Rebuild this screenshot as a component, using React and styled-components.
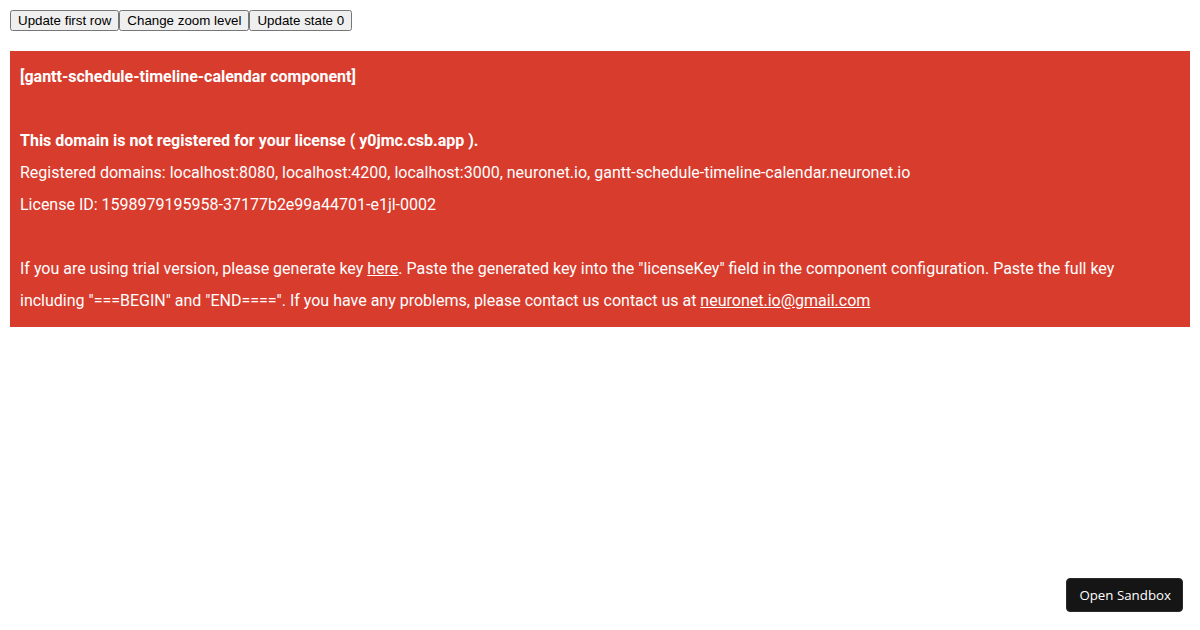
import React, { useState } from "react"
import styled, { createGlobalStyle } from "styled-components"

const GlobalStyle = createGlobalStyle`
  html, body {
    margin: 0;
    padding: 0;
    background: #fff;
  }
`

const Page = styled.div`
  padding: 10px;
`

const Toolbar = styled.div`
  display: flex;
  align-items: flex-start;
  margin-bottom: 20px;
`

const ToolButton = styled.button`
  font-family: "Liberation Sans", Arial, sans-serif;
  font-size: 13.333px;
  margin: 0;
`

const LicenseBox = styled.div`
  background-color: #d83c2d;
  color: #fff;
  padding: 10px 10px 10px;
  font-family: Roboto, "Noto Sans", sans-serif;
  font-size: 16px;
  line-height: 32px;
  p {
    margin: 0;
  }
  a {
    color: #fff;
    text-decoration: underline;
  }
`

const Line = styled.p`
  font-weight: ${({ bold }) => (bold ? 700 : 400)};
  min-height: 32px;
`

const SandboxButton = styled.a`
  position: fixed;
  right: 17px;
  bottom: 18px;
  height: 34px;
  padding: 0 11px 0 12px;
  display: flex;
  align-items: center;
  background: #151515;
  color: #fff;
  border: 1px solid #2a2a2a;
  border-radius: 4px;
  font-family: "Open Sans", "Noto Sans", sans-serif;
  font-size: 13.3px;
  text-decoration: none;
  box-sizing: border-box;
`

function App() {
    const [count, setCount] = useState(0)

    return (
        <Page>
            <GlobalStyle />
            <Toolbar>
                <ToolButton>Update first row</ToolButton>
                <ToolButton>Change zoom level</ToolButton>
                <ToolButton onClick={() => setCount(count + 1)}>Update state {count}</ToolButton>
            </Toolbar>
            <LicenseBox>
                <Line bold>[gantt-schedule-timeline-calendar component]</Line>
                <Line />
                <Line bold>This domain is not registered for your license ( y0jmc.csb.app ).</Line>
                <Line>Registered domains: localhost:8080, localhost:4200, localhost:3000, neuronet.io, gantt-schedule-timeline-calendar.neuronet.io</Line>
                <Line>License ID: 1598979195958-37177b2e99a44701-e1jl-0002</Line>
                <Line />
                <Line>
                    If you are using trial version, please generate key <a href="#">here</a>. Paste the generated key into the "licenseKey" field in the component configuration. Paste the full key including "===BEGIN" and "END====". If you have any problems, please contact us contact us at <a href="#">neuronet.io@gmail.com</a>
                </Line>
            </LicenseBox>
            <SandboxButton href="#">Open Sandbox</SandboxButton>
        </Page>
    )
}

export default App
